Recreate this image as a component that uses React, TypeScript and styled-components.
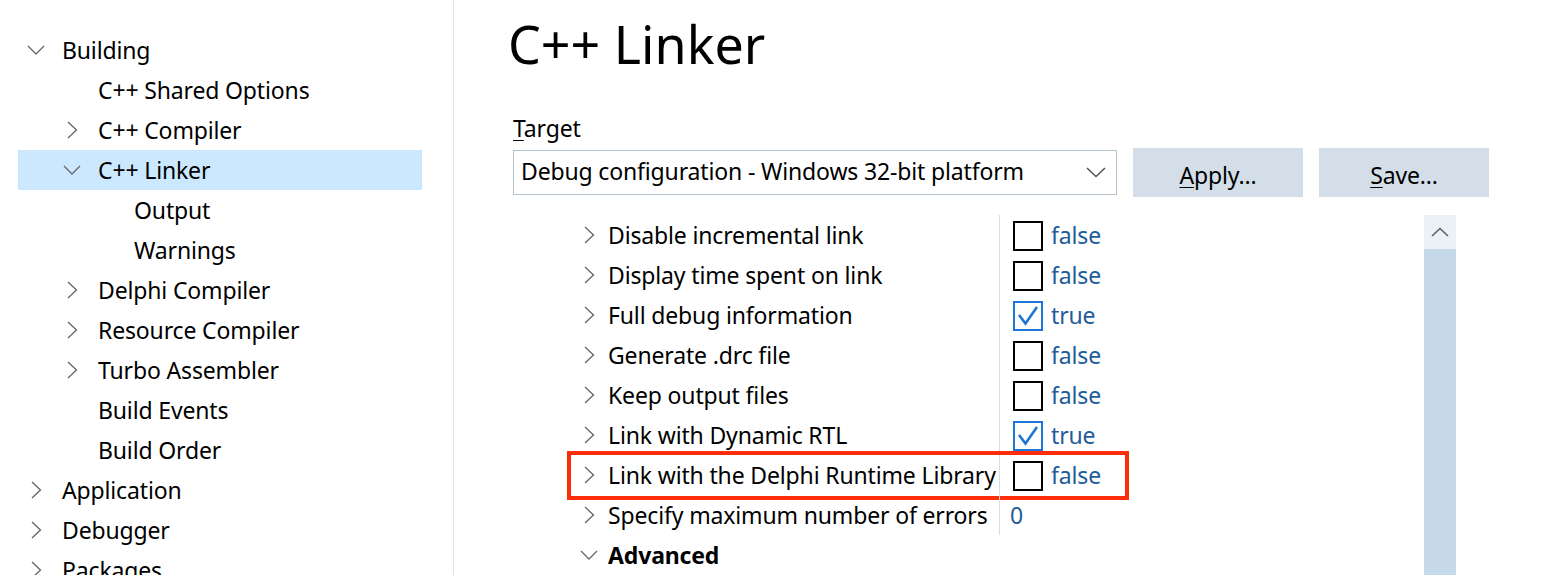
import React from "react";
import styled, { createGlobalStyle } from "styled-components";

const GlobalStyle = createGlobalStyle`
  html, body {
    margin: 0;
    padding: 0;
    background: #ffffff;
    overflow: hidden;
  }
  body {
    font-family: "Noto Sans", "Open Sans", sans-serif;
    color: #000000;
    font-size: 23px;
    letter-spacing: -0.15px;
  }
`;

const Window = styled.div`
  display: flex;
  width: 1547px;
  height: 575px;
  overflow: hidden;
`;

const Sidebar = styled.nav`
  width: 454px;
  flex: none;
  box-sizing: border-box;
  border-right: 1px solid #dde3e9;
  padding: 30px 31px 0 18px;
  display: flex;
  flex-direction: column;
`;

const TreeRow = styled.div<{ $level: number; $selected?: boolean }>`
  height: 40px;
  flex: none;
  display: flex;
  align-items: center;
  padding-left: ${(p) => 8 + p.$level * 36}px;
  background: ${(p) => (p.$selected ? "#cce8ff" : "transparent")};
  white-space: nowrap;
  line-height: 40px;
`;

const ChevronSlot = styled.span`
  width: 36px;
  flex: none;
  display: flex;
  align-items: center;
  svg {
    margin-left: 1px;
  }
`;

const Main = styled.main`
  flex: 1;
  min-width: 0;
  padding-left: 59px;
  display: flex;
  flex-direction: column;
`;

const Title = styled.h1`
  margin: 0 0 0 -5px;
  font-size: 52px;
  font-weight: 400;
  letter-spacing: 0;
  line-height: 88px;
  height: 88px;
`;

const FieldLabel = styled.div`
  margin-top: 20px;
  line-height: 40px;
  height: 40px;
`;

const AccessKey = styled.span`
  text-decoration: underline;
  text-underline-offset: 3px;
  text-decoration-thickness: 1px;
`;

const ControlRow = styled.div`
  display: flex;
  align-items: center;
  gap: 16px;
  height: 49px;
`;

const Select = styled.div`
  width: 604px;
  height: 45px;
  box-sizing: border-box;
  border: 1px solid #b6c2cc;
  display: flex;
  align-items: center;
  justify-content: space-between;
  padding: 0 10px 4px 7px;
  white-space: nowrap;
  svg {
    margin-top: 4px;
  }
`;

const Button = styled.button`
  width: 170px;
  height: 49px;
  border: none;
  background: #d4dee8;
  font: inherit;
  letter-spacing: inherit;
  color: #000;
  padding: 4px 0 0;
  cursor: default;
`;

const PropArea = styled.section`
  margin-top: 18px;
  width: 943px;
  flex: 1;
  min-height: 0;
  display: flex;
`;

const PropList = styled.div`
  flex: 1;
  display: flex;
  flex-direction: column;
`;

const PropRow = styled.div`
  position: relative;
  height: 40px;
  flex: none;
  display: flex;
`;

const NameCell = styled.div<{ $full?: boolean }>`
  width: ${(p) => (p.$full ? "auto" : "487px")};
  flex: ${(p) => (p.$full ? "1" : "none")};
  box-sizing: border-box;
  padding-left: 67px;
  display: flex;
  align-items: center;
  gap: 10px;
  overflow: hidden;
  white-space: nowrap;
  border-right: ${(p) => (p.$full ? "none" : "1px solid #d9dee3")};
  font-weight: ${(p) => (p.$full ? 700 : 400)};
  svg {
    flex: none;
  }
`;

const ValueCell = styled.div<{ $text?: boolean }>`
  display: flex;
  align-items: center;
  gap: 8px;
  padding-left: ${(p) => (p.$text ? 10 : 13)}px;
  color: #1f5c99;
`;

const CheckBox = styled.span<{ $checked: boolean }>`
  width: 30px;
  height: 30px;
  box-sizing: border-box;
  border: 2px solid ${(p) => (p.$checked ? "#1a78d4" : "#000000")};
  display: flex;
  align-items: center;
  justify-content: center;
  margin-top: 1px;
`;

const Highlight = styled.div`
  position: absolute;
  left: 54px;
  top: -4px;
  width: 562px;
  height: 49px;
  box-sizing: border-box;
  border: 4px solid #ff2d0a;
  pointer-events: none;
`;

const Scrollbar = styled.div`
  width: 32px;
  flex: none;
  display: flex;
  flex-direction: column;
`;

const ScrollUp = styled.div`
  height: 34px;
  flex: none;
  background: #ebf1f6;
  display: flex;
  align-items: center;
  justify-content: center;
`;

const ScrollThumb = styled.div`
  flex: 1;
  background: #c5d9e8;
`;

const ChevronRight = () => (
  <svg width="18" height="18" viewBox="0 0 18 18">
    <path d="M5 1 L13.5 9 L5 17" fill="none" stroke="#666" strokeWidth="1.3" />
  </svg>
);

const ChevronDown = () => (
  <svg width="18" height="18" viewBox="0 0 18 18">
    <path d="M1 5 L9 13 L17 5" fill="none" stroke="#666" strokeWidth="1.3" />
  </svg>
);

const SelectChevron = () => (
  <svg width="20" height="11" viewBox="0 0 20 11">
    <path d="M1 1 L10 9.5 L19 1" fill="none" stroke="#555" strokeWidth="1.5" />
  </svg>
);

const CaretUp = () => (
  <svg width="18" height="10" viewBox="0 0 18 10">
    <path d="M1 9 L9 1.5 L17 9" fill="none" stroke="#606060" strokeWidth="1.6" />
  </svg>
);

const CheckMark = () => (
  <svg width="24" height="24" viewBox="0 0 24 24">
    <path d="M3 11 L9.5 19.5 L21 3" fill="none" stroke="#1a78d4" strokeWidth="2.6" />
  </svg>
);

type TreeItem = {
  label: string;
  level: number;
  state?: "open" | "closed";
  selected?: boolean;
};

const tree: TreeItem[] = [
  { label: "Building", level: 0, state: "open" },
  { label: "C++ Shared Options", level: 1 },
  { label: "C++ Compiler", level: 1, state: "closed" },
  { label: "C++ Linker", level: 1, state: "open", selected: true },
  { label: "Output", level: 2 },
  { label: "Warnings", level: 2 },
  { label: "Delphi Compiler", level: 1, state: "closed" },
  { label: "Resource Compiler", level: 1, state: "closed" },
  { label: "Turbo Assembler", level: 1, state: "closed" },
  { label: "Build Events", level: 1 },
  { label: "Build Order", level: 1 },
  { label: "Application", level: 0, state: "closed" },
  { label: "Debugger", level: 0, state: "closed" },
  { label: "Packages", level: 0, state: "closed" },
];

type Prop = {
  name: string;
  value: boolean | string;
  highlight?: boolean;
};

const props: Prop[] = [
  { name: "Disable incremental link", value: false },
  { name: "Display time spent on link", value: false },
  { name: "Full debug information", value: true },
  { name: "Generate .drc file", value: false },
  { name: "Keep output files", value: false },
  { name: "Link with Dynamic RTL", value: true },
  { name: "Link with the Delphi Runtime Library", value: false, highlight: true },
  { name: "Specify maximum number of errors", value: "0" },
];

export default function App() {
  return (
    <>
      <GlobalStyle />
      <Window>
        <Sidebar>
          {tree.map((item) => (
            <TreeRow key={item.label} $level={item.level} $selected={item.selected}>
              <ChevronSlot>
                {item.state === "open" && <ChevronDown />}
                {item.state === "closed" && <ChevronRight />}
              </ChevronSlot>
              {item.label}
            </TreeRow>
          ))}
        </Sidebar>
        <Main>
          <Title>C++ Linker</Title>
          <FieldLabel>
            <AccessKey>T</AccessKey>arget
          </FieldLabel>
          <ControlRow>
            <Select>
              <span>Debug configuration - Windows 32-bit platform</span>
              <SelectChevron />
            </Select>
            <Button>
              <AccessKey>A</AccessKey>pply...
            </Button>
            <Button>
              <AccessKey>S</AccessKey>ave...
            </Button>
          </ControlRow>
          <PropArea>
            <PropList>
              {props.map((p) => (
                <PropRow key={p.name}>
                  <NameCell>
                    <ChevronRight />
                    {p.name}
                  </NameCell>
                  {typeof p.value === "boolean" ? (
                    <ValueCell>
                      <CheckBox $checked={p.value}>{p.value && <CheckMark />}</CheckBox>
                      {p.value ? "true" : "false"}
                    </ValueCell>
                  ) : (
                    <ValueCell $text>{p.value}</ValueCell>
                  )}
                  {p.highlight && <Highlight />}
                </PropRow>
              ))}
              <PropRow>
                <NameCell $full>
                  <ChevronDown />
                  Advanced
                </NameCell>
              </PropRow>
            </PropList>
            <Scrollbar>
              <ScrollUp>
                <CaretUp />
              </ScrollUp>
              <ScrollThumb />
            </Scrollbar>
          </PropArea>
        </Main>
      </Window>
    </>
  );
}
